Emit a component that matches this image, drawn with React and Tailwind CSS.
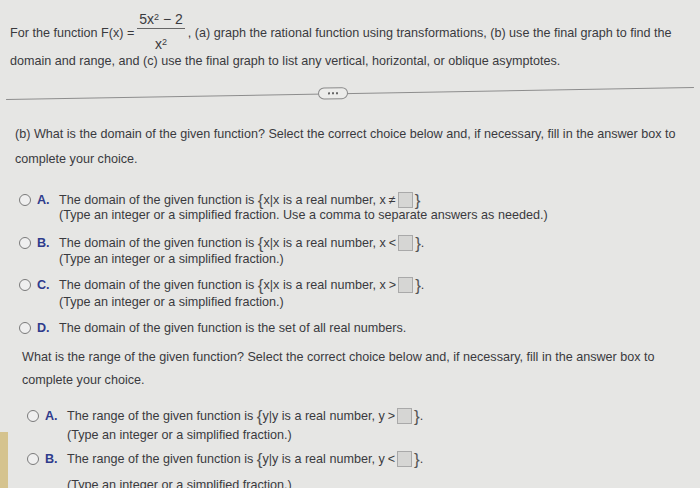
import React from "react";

function Box() {
  return (
    <span className="inline-block w-[15px] h-[16px] border border-[#a9a9a9] bg-[#d6d6d4] mx-[2px] align-middle" />
  );
}

function Set({ v, op }) {
  return (
    <>
      <span className="text-[17px] leading-none text-[#555]">{"{"}</span>
      <span>{v}|{v} is a real number, {v}</span>
      <span className="ml-[3px]">{op}</span>
      <Box />
      <span className="text-[17px] leading-none text-[#555]">{"}"}</span>
    </>
  );
}

function Radio() {
  return (
    <span className="inline-block w-[12px] h-[12px] rounded-full border-[1.5px] border-[#7a7a7a] bg-[#efefef] shrink-0" />
  );
}

function Option({ letter, children, sub, className = "", subClass = "" }) {
  return (
    <div className={"flex items-start " + className}>
      <div className="flex items-center h-[16px] w-[40px] shrink-0">
        <Radio />
        <span className="ml-[6px] font-bold text-[#2f3b8c]">{letter}.</span>
      </div>
      <div className="flex flex-col">
        <div className="h-[16px] flex items-center whitespace-nowrap">{children}</div>
        {sub && <div className={"leading-[14px] whitespace-nowrap " + subClass}>{sub}</div>}
      </div>
    </div>
  );
}

export default function App() {
  return (
    <div className="relative w-[700px] h-[488px] overflow-hidden bg-[#e6e6e4] text-[#3a3a3e] text-[12.6px] font-['Liberation_Sans',Arial,sans-serif]">
      <div className="absolute left-0 bottom-0 w-[8px] h-[56px] bg-[#d5c38e]" />
      {/* intro */}
      <div className="pl-[10px] pt-[10px]">
        <div className="flex items-center whitespace-nowrap">
          <span>For the function F(x) =</span>
          <span className="inline-flex flex-col items-center mx-[3px] pb-[3px]">
            <span className="leading-[18px] px-[2px] text-[14px]">
              5x<sup className="text-[9px]">2</sup> − 2
            </span>
            <span className="block w-full h-px bg-[#666]" />
            <span className="leading-[18px] pt-[6px] text-[14px]">
              x<sup className="text-[9px]">2</sup>
            </span>
          </span>
          <span>, (a) graph the rational function using transformations, (b) use the final graph to find the</span>
        </div>
        <div className="mt-[-2px] leading-[14px] whitespace-nowrap">
          domain and range, and (c) use the final graph to list any vertical, horizontal, or oblique asymptotes.
        </div>
      </div>

      {/* divider */}
      <div className="relative mt-[19px] mx-[6px] h-[12px] flex items-center -rotate-1">
        <div className="w-full h-px bg-[#8d8d8d]" />
        <div className="absolute left-[312px] top-0 w-[30px] h-[12px] rounded-full border border-[#8a8a8a] bg-[#ececea] flex items-center justify-center gap-[2px]">
          <span className="w-[2px] h-[2px] bg-[#666]" />
          <span className="w-[2px] h-[2px] bg-[#666]" />
          <span className="w-[2px] h-[2px] bg-[#666]" />
        </div>
      </div>

      {/* domain */}
      <div className="pl-[15px] mt-[23px] leading-[25px]">
        <div className="whitespace-nowrap">
          (b) What is the domain of the given function? Select the correct choice below and, if necessary, fill in the answer box to
        </div>
        <div>complete your choice.</div>
      </div>

      <div className="pl-[19px] mt-[20px] flex flex-col">
        <Option
          letter="A"
          sub="(Type an integer or a simplified fraction. Use a comma to separate answers as needed.)"
        >
          <span>The domain of the given function is&nbsp;</span>
          <Set v="x" op="≠" />
        </Option>
        <Option letter="B" className="mt-[13px]" subClass="mt-[1px]" sub="(Type an integer or a simplified fraction.)">
          <span>The domain of the given function is&nbsp;</span>
          <Set v="x" op="<" />
          <span>.</span>
        </Option>
        <Option letter="C" className="mt-[11px]" subClass="mt-[2px]" sub="(Type an integer or a simplified fraction.)">
          <span>The domain of the given function is&nbsp;</span>
          <Set v="x" op=">" />
          <span>.</span>
        </Option>
        <Option letter="D" className="mt-[11px]">
          <span>The domain of the given function is the set of all real numbers.</span>
        </Option>
      </div>

      {/* range */}
      <div className="pl-[22px] mt-[10px] leading-[23px]">
        <div className="whitespace-nowrap">
          What is the range of the given function? Select the correct choice below and, if necessary, fill in the answer box to
        </div>
        <div>complete your choice.</div>
      </div>

      <div className="pl-[27px] mt-[16px] flex flex-col">
        <Option letter="A" subClass="mt-[4px]" sub="(Type an integer or a simplified fraction.)">
          <span>The range of the given function is&nbsp;</span>
          <Set v="y" op=">" />
          <span>.</span>
        </Option>
        <Option letter="B" className="mt-[9px]" subClass="mt-[11px]" sub="(Type an integer or a simplified fraction.)">
          <span>The range of the given function is&nbsp;</span>
          <Set v="y" op="<" />
          <span>.</span>
        </Option>
      </div>
    </div>
  );
}
